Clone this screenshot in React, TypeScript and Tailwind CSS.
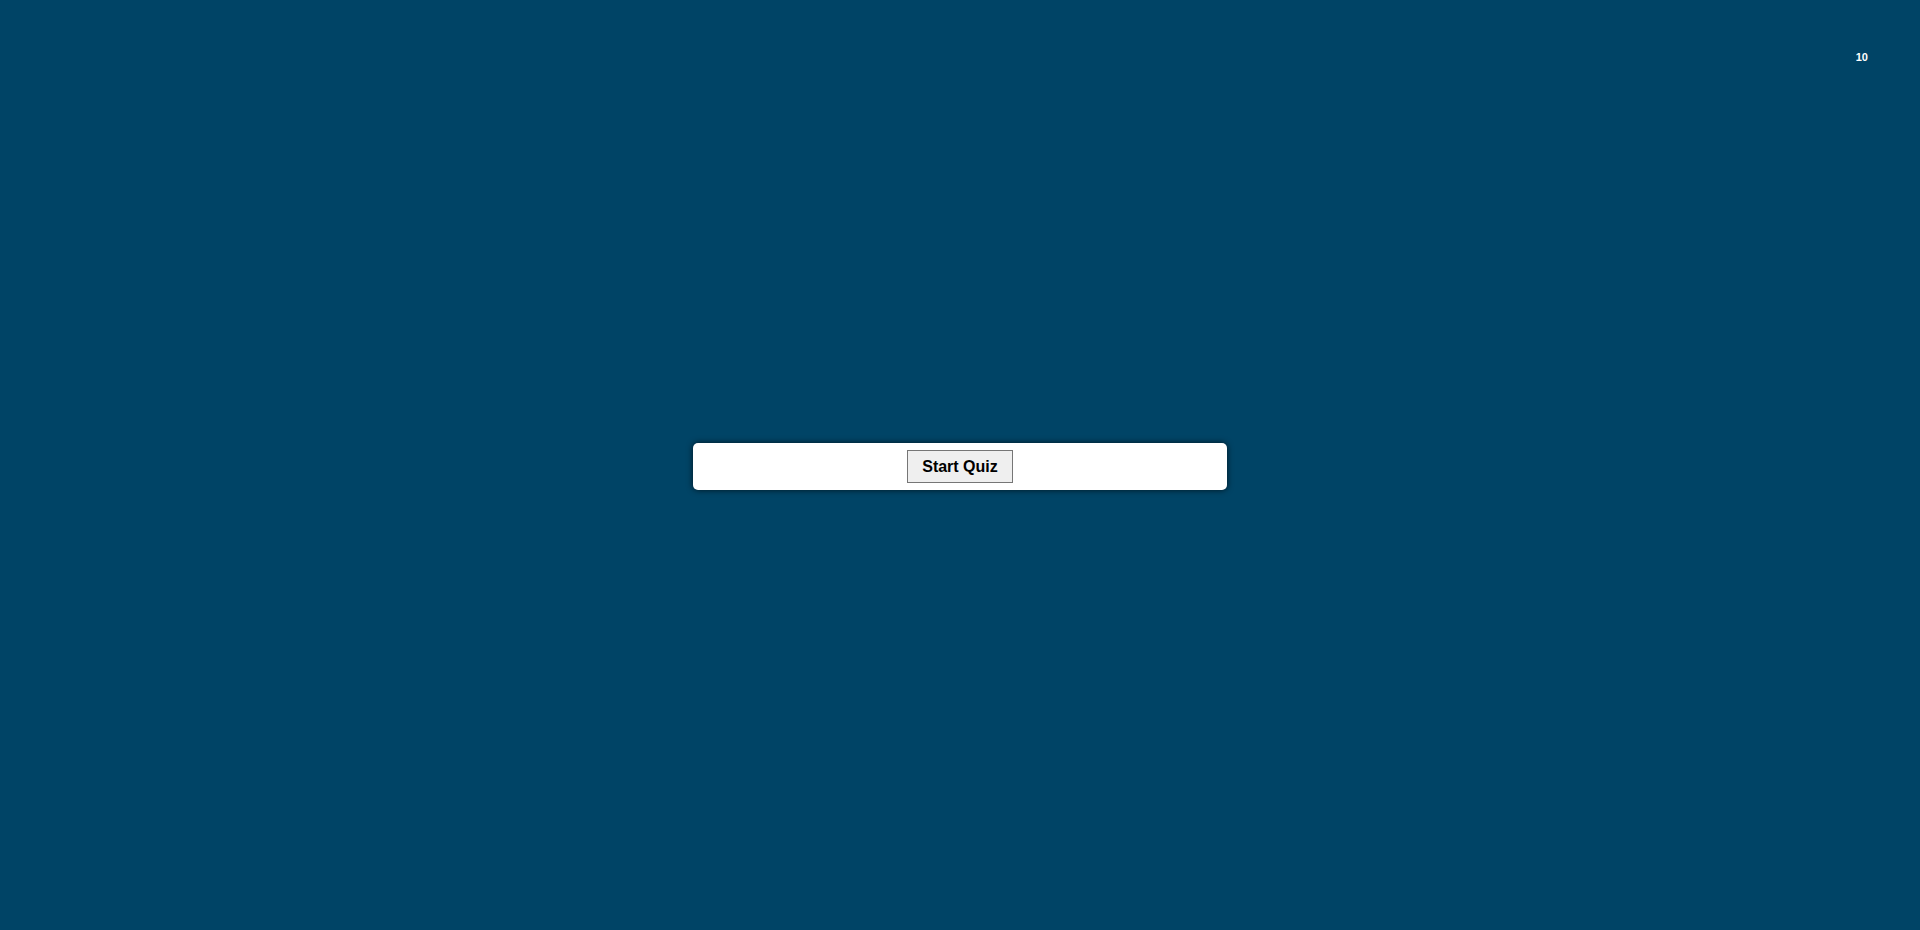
import React from "react";

export default function App() {
  return (
    <div
      className="relative w-full h-[930px] bg-[#004466] flex items-center justify-center pt-[3px]"
      style={{ fontFamily: '"Liberation Sans", Arial, sans-serif' }}
    >
      <div className="absolute top-[52px] right-[52px] text-white text-[11px] font-bold leading-none">
        10
      </div>
      <div className="w-[534px] bg-white rounded-[5px] shadow-[0_0_6px_rgba(0,0,0,0.7)] flex justify-center py-[7px]">
        <button className="h-[33px] px-[14px] bg-[#efefef] border border-[#767676] text-black text-[16px] font-bold leading-none">
          Start Quiz
        </button>
      </div>
    </div>
  );
}
